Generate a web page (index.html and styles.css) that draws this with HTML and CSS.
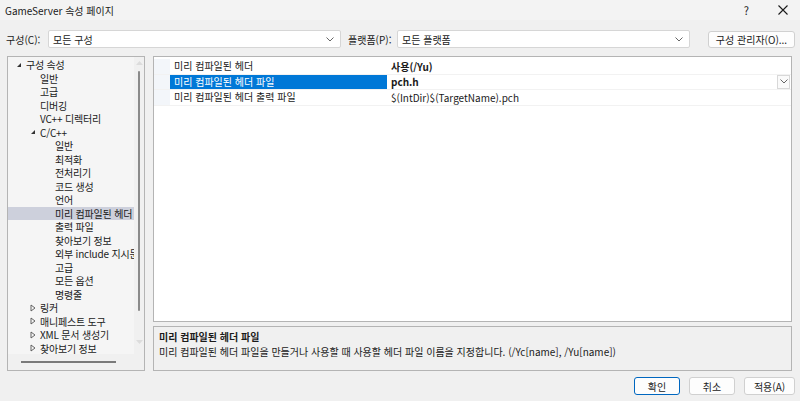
FILE: index.html
```html
<!DOCTYPE html>
<html lang="ko">
<head>
  <meta charset="UTF-8" />
  <title>GameServer 속성 페이지</title>
  <link rel="stylesheet" href="styles.css">
</head>
<body>
  <div class="titlebar">
    <span class="title">GameServer 속성 페이지</span>
    <span class="help">?</span>
    <svg class="close" width="10" height="10" viewBox="0 0 10 10"><path d="M0.5 0.5L9.5 9.5M9.5 0.5L0.5 9.5" stroke="#1a1a1a" stroke-width="1.1"/></svg>
  </div>

  <div class="toolbar">
    <label class="lbl lbl-config">구성(C):</label>
    <div class="combo combo-config">
      <span>모든 구성</span>
      <svg class="chev" width="8" height="5" viewBox="0 0 8 5"><path d="M0.5 0.5L4 4L7.5 0.5" fill="none" stroke="#666" stroke-width="1"/></svg>
    </div>
    <label class="lbl lbl-platform">플랫폼(P):</label>
    <div class="combo combo-platform">
      <span>모든 플랫폼</span>
      <svg class="chev" width="8" height="5" viewBox="0 0 8 5"><path d="M0.5 0.5L4 4L7.5 0.5" fill="none" stroke="#666" stroke-width="1"/></svg>
    </div>
    <button class="btn btn-manager">구성 관리자(O)...</button>
  </div>

  <div class="main">
    <div class="tree">
      <div class="tree-items">
        <div class="node lv0"><svg class="tri" width="6" height="6" viewBox="0 0 6 6"><path d="M5 1L5 5L1 5Z" fill="#333"/></svg>구성 속성</div>
        <div class="node lv1">일반</div>
        <div class="node lv1">고급</div>
        <div class="node lv1">디버깅</div>
        <div class="node lv1">VC++ 디렉터리</div>
        <div class="node lv1e"><svg class="tri" width="6" height="6" viewBox="0 0 6 6"><path d="M5 1L5 5L1 5Z" fill="#333"/></svg>C/C++</div>
        <div class="node lv2">일반</div>
        <div class="node lv2">최적화</div>
        <div class="node lv2">전처리기</div>
        <div class="node lv2">코드 생성</div>
        <div class="node lv2">언어</div>
        <div class="node lv2 selected">미리 컴파일된 헤더</div>
        <div class="node lv2">출력 파일</div>
        <div class="node lv2">찾아보기 정보</div>
        <div class="node lv2">외부 include 지시문</div>
        <div class="node lv2">고급</div>
        <div class="node lv2">모든 옵션</div>
        <div class="node lv2">명령줄</div>
        <div class="node lv1e"><svg class="tri" width="6" height="8" viewBox="0 0 6 8"><path d="M1 1L5 4L1 7Z" fill="none" stroke="#555" stroke-width="0.9"/></svg>링커</div>
        <div class="node lv1e"><svg class="tri" width="6" height="8" viewBox="0 0 6 8"><path d="M1 1L5 4L1 7Z" fill="none" stroke="#555" stroke-width="0.9"/></svg>매니페스트 도구</div>
        <div class="node lv1e"><svg class="tri" width="6" height="8" viewBox="0 0 6 8"><path d="M1 1L5 4L1 7Z" fill="none" stroke="#555" stroke-width="0.9"/></svg>XML 문서 생성기</div>
        <div class="node lv1e"><svg class="tri" width="6" height="8" viewBox="0 0 6 8"><path d="M1 1L5 4L1 7Z" fill="none" stroke="#555" stroke-width="0.9"/></svg>찾아보기 정보</div>
      </div>
      <div class="vscroll">
        <svg class="arrow" width="7" height="4" viewBox="0 0 7 4"><path d="M0 4L3.5 0L7 4Z" fill="#dcdcdc"/></svg>
        <div class="thumb"></div>
        <svg class="arrow" width="7" height="4" viewBox="0 0 7 4"><path d="M0 0L3.5 4L7 0Z" fill="#dcdcdc"/></svg>
      </div>
      <div class="hscroll"><div class="hthumb"></div></div>
    </div>

    <div class="right">
      <div class="grid">
        <div class="row">
          <div class="gutter"></div>
          <div class="name">미리 컴파일된 헤더</div>
          <div class="value bold">사용(/Yu)</div>
        </div>
        <div class="row active">
          <div class="gutter"></div>
          <div class="name">미리 컴파일된 헤더 파일</div>
          <div class="value bold">pch.h</div>
          <div class="dropbtn"><svg width="8" height="5" viewBox="0 0 8 5"><path d="M0.5 0.5L4 4L7.5 0.5" fill="none" stroke="#666" stroke-width="1"/></svg></div>
        </div>
        <div class="row">
          <div class="gutter"></div>
          <div class="name">미리 컴파일된 헤더 출력 파일</div>
          <div class="value">$(IntDir)$(TargetName).pch</div>
        </div>
      </div>
      <div class="desc">
        <div class="desc-title">미리 컴파일된 헤더 파일</div>
        <div class="desc-text">미리 컴파일된 헤더 파일을 만들거나 사용할 때 사용할 헤더 파일 이름을 지정합니다. (/Yc[name], /Yu[name])</div>
      </div>
    </div>
  </div>

  <div class="footer">
    <button class="btn btn-ok">확인</button>
    <button class="btn btn-cancel">취소</button>
    <button class="btn btn-apply">적용(A)</button>
  </div>
</body>
</html>
```

FILE: styles.css
```css
body {
  margin: 0;
  width: 800px;
  height: 401px;
  overflow: hidden;
  background: #f0f0f0;
  font-family: "Noto Sans CJK KR", "Noto Sans", sans-serif;
  font-size: 10px;
  color: #1a1a1a;
}

.titlebar {
  height: 20px;
  display: flex;
  align-items: center;
  padding-left: 5px;
  background: #f3f3f3;
}

.title {
  flex: 1;
}

.help {
  margin-right: 29px;
  font-size: 11px;
}

.close {
  margin-right: 12px;
}

.toolbar {
  display: flex;
  align-items: center;
  margin-top: 10px;
  height: 18px;
  padding-left: 6px;
}

.lbl-config {
  width: 42px;
}

.lbl-platform {
  width: 49px;
}

.combo {
  box-sizing: border-box;
  height: 18px;
  background: #fff;
  border: 1px solid #d6d6d6;
  border-radius: 2px;
  display: flex;
  align-items: center;
  padding: 0 6px 0 4px;
}

.combo span {
  flex: 1;
}

.combo-config {
  width: 293px;
  margin-right: 7px;
}

.combo-platform {
  width: 293px;
  margin-right: 18px;
}

.btn {
  box-sizing: border-box;
  font-family: "Noto Sans CJK KR", "Noto Sans", sans-serif;
  font-size: 10px;
  color: #1a1a1a;
  background: #fdfdfd;
  border: 1px solid #d0d0d0;
  border-radius: 3px;
  padding: 0;
}

.btn-manager {
  width: 87px;
  height: 17px;
}

.main {
  display: flex;
  margin-top: 8px;
  padding-left: 7px;
  height: 315px;
}

.tree {
  position: relative;
  box-sizing: border-box;
  width: 138px;
  height: 315px;
  border: 1px solid #b4b4b4;
  background: #f5f5f5;
  display: flex;
  margin-right: 8px;
}

.tree-items {
  width: 126px;
  padding-top: 1px;
  overflow: hidden;
}

.node {
  height: 13.5px;
  line-height: 13.5px;
  white-space: nowrap;
  display: flex;
  align-items: center;
  letter-spacing: -0.2px;
}

.node .tri {
  margin-right: 4px;
  flex: none;
}

.lv0 { padding-left: 8px; }
.lv1 { padding-left: 32px; }
.lv1e { padding-left: 22px; }
.lv2 { padding-left: 47px; }

.selected {
  background: #cdd0dc;
}

.vscroll {
  width: 10px;
  display: flex;
  flex-direction: column;
  align-items: center;
  padding: 4px 0 26px;
  background: #f0f0f0;
}

.arrow {
  flex: none;
}

.thumb {
  width: 2px;
  height: 240px;
  margin: 6px 0 auto;
  background: #8a8a8a;
  border-radius: 1px;
}

.hscroll {
  position: absolute;
  left: 0;
  right: 10px;
  bottom: 0;
  height: 16px;
  background: #f0f0f0;
}

.hthumb {
  margin: 7px 0 0 13px;
  width: 95px;
  height: 1.5px;
  background: #7a7a7a;
}

.right {
  width: 639px;
  display: flex;
  flex-direction: column;
}

.grid {
  box-sizing: border-box;
  height: 266px;
  background: #fff;
  border: 1px solid #b4b4b4;
  padding-top: 2px;
}

.row {
  display: flex;
  height: 14.5px;
  align-items: center;
  position: relative;
  border-bottom: 1px solid #f2f2f2;
}

.gutter {
  width: 16px;
  height: 100%;
  background: #f3f6fa;
}

.name {
  width: 213px;
  height: 100%;
  line-height: 14.5px;
  padding-left: 4px;
  white-space: nowrap;
}

.row.active .name {
  background: #0078d7;
  color: #fff;
}

.value {
  padding-left: 4px;
  white-space: nowrap;
}

.bold {
  font-weight: bold;
}

.dropbtn {
  position: absolute;
  right: 1px;
  top: 0;
  box-sizing: border-box;
  width: 13px;
  height: 14px;
  border: 1px solid #d8d8d8;
  background: #fafafa;
  display: flex;
  align-items: center;
  justify-content: center;
}

.desc {
  box-sizing: border-box;
  margin-top: 4px;
  height: 45px;
  border: 1px solid #b4b4b4;
  padding: 3px 5px;
}

.desc-title {
  font-weight: bold;
  line-height: 14px;
}

.desc-text {
  line-height: 15px;
}

.footer {
  display: flex;
  justify-content: flex-end;
  margin-top: 6px;
  padding-right: 5px;
  gap: 9px;
}

.btn-ok,
.btn-cancel {
  width: 46px;
  height: 18px;
}

.btn-ok {
  border: 1.5px solid #0067c0;
}

.btn-apply {
  width: 51px;
  height: 18px;
}
```
